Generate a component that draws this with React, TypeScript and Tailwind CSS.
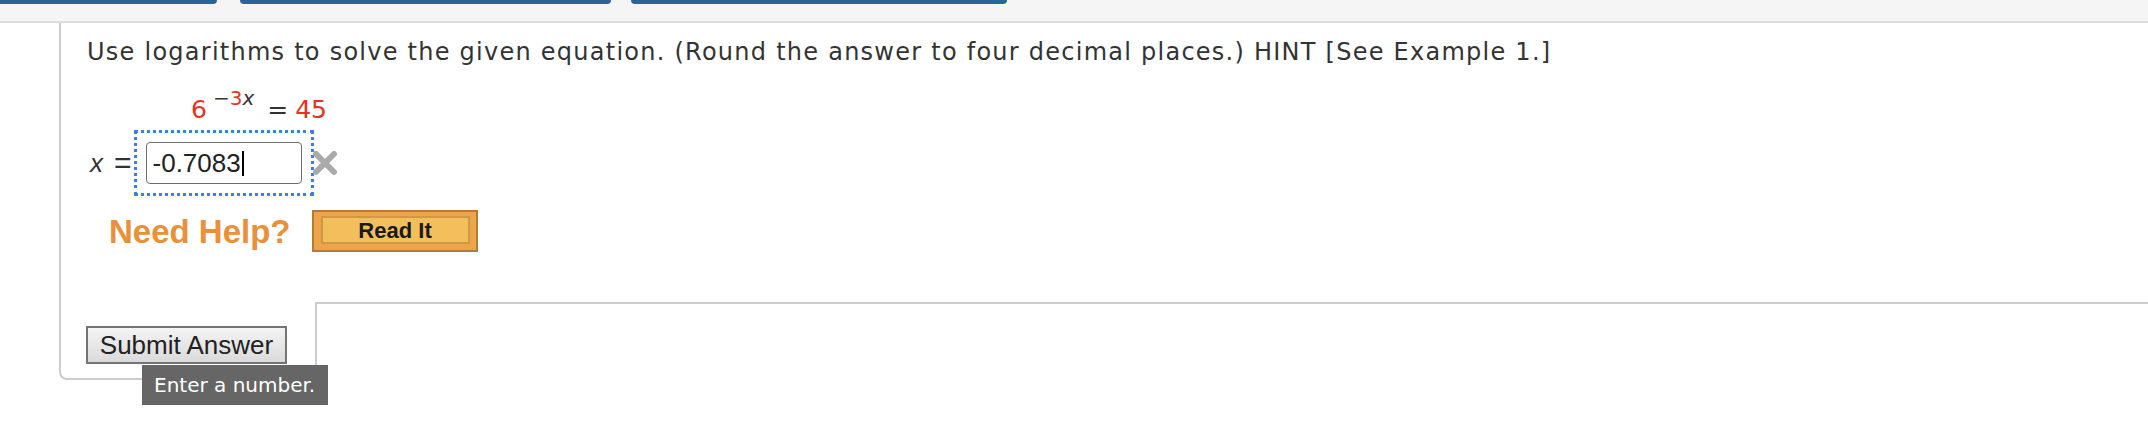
export default function App() {
  return (
    <div className="w-[2148px] h-[446px] bg-white overflow-hidden font-['DejaVu_Sans',sans-serif] text-[#333]">
      {/* strip with the ends of the tabs above */}
      <div className="h-[23px] bg-[#f5f5f5] border-b-2 border-[#dddddd] flex items-start">
        <div className="w-[217px] h-[4px] bg-[#2b6498] rounded-br-[5px]" />
        <div className="ml-[23px] w-[371px] h-[4px] bg-[#2b6498] rounded-b-[5px]" />
        <div className="ml-[20px] w-[376px] h-[4px] bg-[#2b6498] rounded-b-[5px]" />
      </div>

      <div className="pl-[59px]">
        {/* question */}
        <div className="h-[279px] border-l-2 border-[#cccccc] pl-[26px]">
          <p className="pt-[14px] text-[24px] leading-[30px] tracking-[1.25px] whitespace-nowrap">
            Use logarithms to solve the given equation. (Round the answer to four decimal places.) HINT [See Example 1.]
          </p>

          <div className="mt-[27px] h-[32px] pl-[104px] text-[25px] leading-[32px] whitespace-nowrap">
            <span className="text-[#e5331f]">6</span>
            <span className="relative -top-[13px] ml-[6px] text-[20px]">
              <span>−</span>
              <span className="text-[#e5331f]">3</span>
              <span className="italic">x</span>
            </span>
            <span className="ml-[13px]">=</span>
            <span className="ml-[7px] text-[#e5331f]">45</span>
          </div>

          <div className="mt-[4px] flex items-center font-['Liberation_Sans',Arial,sans-serif]">
            <span className="ml-[3px] italic text-[26px] text-[#333]">x</span>
            <span className="ml-[11px] mr-[2px] text-[30px] text-[#333] leading-none">=</span>
            <div className="border-[3px] border-dotted border-[#3c7fe0] p-[9px]">
              <div className="w-[156px] h-[42px] border-[1.5px] border-[#6f6f6f] rounded-[4px] pl-[6px] flex items-center text-[26px] text-[#222]">
                <span>-0.7083</span>
                <span className="ml-[1px] w-[2px] h-[25px] bg-black" />
              </div>
            </div>
            <svg className="-ml-[3px]" width="28" height="28" viewBox="0 0 28 28">
              <path d="M5 5 L23 23 M23 5 L5 23" stroke="#aaaaaa" strokeWidth="6" strokeLinecap="round" />
            </svg>
          </div>

          <div className="mt-[14px] h-[42px] flex items-center font-['Liberation_Sans',Arial,sans-serif]">
            <span className="ml-[22px] text-[33px] leading-none font-bold text-[#e8903a]">Need Help?</span>
            <button className="ml-[21px] w-[166px] h-[42px] border-2 border-[#b07c3c] bg-[#eea54a] pt-[4px] pl-[7px] pr-[6px] pb-[6px]">
              <div className="h-full border-2 border-[#cf9845] bg-[#f3bf5c] flex items-center justify-center text-[22px] font-bold text-[#1a1a1a]">
                Read It
              </div>
            </button>
          </div>
        </div>

        {/* submit row */}
        <div className="flex">
          <div className="relative w-[256px] h-[78px] border-l-2 border-b-2 border-[#cccccc] rounded-bl-[8px] pt-[24px] pl-[25px]">
            <button className="w-[201px] h-[38px] border-2 border-[#747474] bg-linear-to-b from-[#f4f4f4] to-[#dadada] text-[26px] leading-none text-[#222] font-['Liberation_Sans',Arial,sans-serif]">
              Submit Answer
            </button>
            <div className="absolute z-10 left-[81px] top-[63px] w-[186px] h-[40px] bg-[#666666] text-white text-[20px] pl-[12px] flex items-center">
              Enter a number.
            </div>
          </div>
          <div className="flex-1 h-[88px] border-t-2 border-l-2 border-[#cccccc]" />
        </div>
      </div>
    </div>
  );
}
